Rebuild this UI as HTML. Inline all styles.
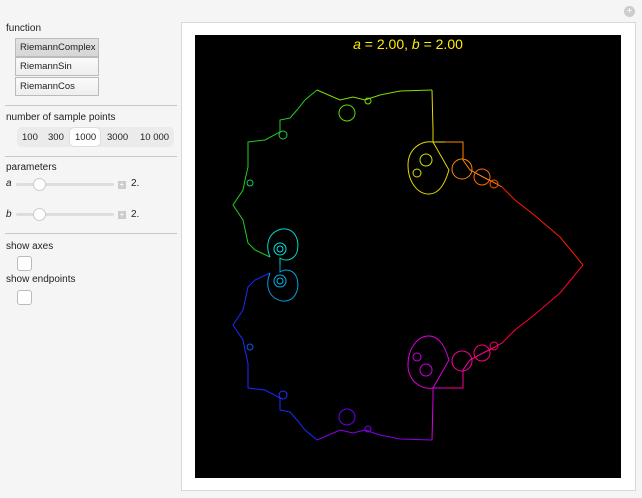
<!DOCTYPE html>
<html><head><style>
body{margin:0;width:642px;height:498px;background:#f5f5f5;font-family:"Liberation Sans",sans-serif;font-size:10px;color:#222;position:relative;overflow:hidden}
.a{position:absolute}
.sep{position:absolute;left:5px;width:172px;height:1px;background:#c8c8c8}
.lb{position:absolute;left:15px;width:84px;height:19px;background:linear-gradient(#fafafa,#eee);border:1px solid #bbb;box-sizing:border-box;padding-left:4px;line-height:18px;font-size:9.5px}
.cb{position:absolute;left:17px;width:13px;height:13px;border:1px solid #bbb;border-radius:3px;background:#fff}
.trk{position:absolute;left:16px;width:98px;height:3px;background:#ddd;border-radius:2px}
.th{position:absolute;width:13px;height:13px;border-radius:50%;background:#fff;border:1px solid #ccc;box-sizing:border-box}
.pl{position:absolute;left:118px;width:8px;height:8px;background:#ccc;color:#fff;font-size:8px;line-height:8px;text-align:center}
</style></head><body>
<div class="a" style="left:624px;top:6px;width:11px;height:11px;border-radius:50%;background:#ccc;color:#fff;font-size:10px;line-height:11px;text-align:center">+</div>
<div class="a" style="left:6px;top:23px">function</div>
<div class="lb" style="top:38px;background:linear-gradient(#e2e2e2,#d6d6d6)">RiemannComplex</div>
<div class="lb" style="top:57px">RiemannSin</div>
<div class="lb" style="top:77px">RiemannCos</div>
<div class="sep" style="top:105px"></div>
<div class="a" style="left:6px;top:112px">number of sample points</div>
<div class="a" style="left:17px;top:127px;width:157px;height:20px;background:#ebebeb;border-radius:5px"></div>
<div class="a" style="left:70px;top:128px;width:30px;height:18px;background:#fff;border-radius:4px;box-shadow:0 0 1px #999"></div>
<div class="a" style="left:22px;top:132px;font-size:9.5px">100</div>
<div class="a" style="left:48px;top:132px;font-size:9.5px">300</div>
<div class="a" style="left:75px;top:132px;font-size:9.5px">1000</div>
<div class="a" style="left:107px;top:132px;font-size:9.5px">3000</div>
<div class="a" style="left:140px;top:132px;font-size:9.5px">10 000</div>
<div class="sep" style="top:156px"></div>
<div class="a" style="left:6px;top:162px">parameters</div>
<div class="a" style="left:6px;top:178px;font-style:italic">a</div>
<div class="trk" style="top:183px"></div><div class="th" style="left:33px;top:178px"></div>
<div class="pl" style="top:181px">+</div><div class="a" style="left:131px;top:178px">2.</div>
<div class="a" style="left:6px;top:209px;font-style:italic">b</div>
<div class="trk" style="top:213px"></div><div class="th" style="left:33px;top:208px"></div>
<div class="pl" style="top:211px">+</div><div class="a" style="left:131px;top:209px">2.</div>
<div class="sep" style="top:233px"></div>
<div class="a" style="left:6px;top:241px">show axes</div>
<div class="cb" style="top:256px"></div>
<div class="a" style="left:6px;top:274px">show endpoints</div>
<div class="cb" style="top:290px"></div>
<div class="a" style="left:181px;top:22px;width:455px;height:469px;background:#fff;border:1px solid #d8d8d8;box-sizing:border-box"></div>
<svg class="a" style="left:195px;top:35px" width="426" height="443" viewBox="195 35 426 443">
<rect x="195" y="35" width="426" height="443" fill="#000"/>
<text x="408" y="49" fill="#ffee00" font-size="14" text-anchor="middle" font-family="Liberation Sans"><tspan font-style="italic">a</tspan> =  2.00, <tspan font-style="italic">b</tspan> =  2.00</text>
<g fill="none" stroke-width="1">
<polyline stroke="#ff1a00" points="583,265 560,237 533,214 515,200 502,187"/>
<polyline stroke="#ff8800" points="502,187 493,182 485,178 470,170 463,160 463,142 445,142"/>
<circle stroke="#ff8800" cx="462" cy="169" r="10"/><circle stroke="#ff6600" cx="482" cy="177" r="8"/><circle stroke="#ff5500" cx="494" cy="184" r="4"/>
<polyline stroke="#e6d800" points="445,142 433,142 433,130 432,90"/>
<path stroke="#e6d800" d="M433,142 C420,140 408,150 408,165 C408,182 418,195 430,194 C440,193 445,183 449,170 L433,142"/>
<circle stroke="#d8e000" cx="426" cy="160" r="6"/><circle stroke="#d8e000" cx="417" cy="173" r="4"/>
<polyline stroke="#88dd00" points="432,90 400,91 380,95 365,100 353,97 340,100 317,90"/>
<circle stroke="#55dd00" cx="347" cy="113" r="8"/><circle stroke="#77dd00" cx="368" cy="101" r="3"/>
<polyline stroke="#22cc22" points="317,90 305,100 297,110 290,118 280,120 280,132 265,140 248,142 248,167 245,180 243,190 233,205 243,220 248,243 255,250 270,257"/>
<circle stroke="#22cc44" cx="283" cy="135" r="4"/><circle stroke="#11cc66" cx="250" cy="183" r="3"/>
<path stroke="#00d8c8" d="M270,257 C265,245 268,232 282,229 C295,228 300,240 297,252 C294,260 286,262 280,258 L280,265"/>
<circle stroke="#00e0e0" cx="280" cy="249" r="6"/><circle stroke="#00e0e0" cx="280" cy="249" r="3"/>
<polyline stroke="#ff0030" points="583,265 560,293 533,316 515,330 502,343"/>
<polyline stroke="#ff00a0" points="502,343 493,348 485,352 470,360 463,370 463,388 445,388"/>
<circle stroke="#ff0099" cx="462" cy="361" r="10"/><circle stroke="#ff0077" cx="482" cy="353" r="8"/><circle stroke="#ff0055" cx="494" cy="346" r="4"/>
<polyline stroke="#dd00dd" points="445,388 433,388 433,400 432,440"/>
<path stroke="#dd00dd" d="M433,388 C420,390 408,380 408,365 C408,348 418,335 430,336 C440,337 445,347 449,360 L433,388"/>
<circle stroke="#cc00dd" cx="426" cy="370" r="6"/><circle stroke="#cc00dd" cx="417" cy="357" r="4"/>
<polyline stroke="#8800ee" points="432,440 400,439 380,435 365,430 353,433 340,430 317,440"/>
<circle stroke="#6600ee" cx="347" cy="417" r="8"/><circle stroke="#7700ee" cx="368" cy="429" r="3"/>
<polyline stroke="#1a2aff" points="317,440 305,430 297,420 290,412 280,410 280,398 265,390 248,388 248,363 245,350 243,340 233,325 243,310 248,287 255,280 270,273"/>
<circle stroke="#2233ff" cx="283" cy="395" r="4"/><circle stroke="#1155ee" cx="250" cy="347" r="3"/>
<path stroke="#00a0e0" d="M270,273 C265,285 268,298 282,301 C295,302 300,290 297,278 C294,270 286,268 280,272 L280,265"/>
<circle stroke="#00b0e0" cx="280" cy="281" r="6"/><circle stroke="#00b0e0" cx="280" cy="281" r="3"/>
</g>
</svg>
</body></html>
